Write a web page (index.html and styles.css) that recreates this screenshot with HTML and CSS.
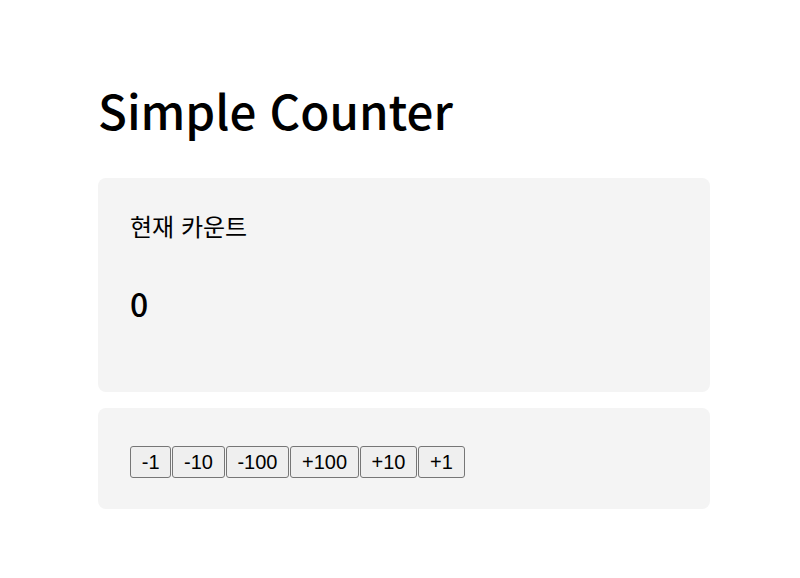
FILE: index.html
```html
<!DOCTYPE html>
<html lang="ko">

<head>
    <meta charset="UTF-8" />
    <meta name="viewport" content="width=device-width,initial-scale=1.0" />
    <title>Simple Counter</title>
    <link rel="stylesheet" href="styles.css">
</head>

<body>
    <div class="app">
        <h1 class="title">Simple Counter</h1>

        <div class="card count-card">
            <div class="count-label">현재 카운트</div>
            <div class="count-value">0</div>
        </div>

        <div class="card button-card">
            <div class="buttons">
                <button class="step-btn">-1</button>
                <button class="step-btn">-10</button>
                <button class="step-btn">-100</button>
                <button class="step-btn">+100</button>
                <button class="step-btn">+10</button>
                <button class="step-btn">+1</button>
            </div>
        </div>
    </div>
</body>

</html>
```

FILE: styles.css
```css
* {
    margin: 0;
    padding: 0;
    box-sizing: border-box;
}

body {
    background: #ffffff;
    color: #000000;
    font-family: "Noto Sans CJK KR", "Noto Sans", sans-serif;
}

.app {
    width: 612px;
    margin-left: 98px;
    padding-top: 81px;
}

.title {
    font-family: "Noto Sans CJK KR Medium", "Noto Sans CJK KR", sans-serif;
    font-size: 47.5px;
    font-weight: 500;
    line-height: 58px;
    margin-bottom: 39px;
}

.card {
    background: #f4f4f4;
    border-radius: 8px;
    margin-bottom: 16px;
}

.count-card {
    height: 214px;
    padding: 32px;
}

.count-label {
    font-size: 24px;
    line-height: 32px;
    margin-bottom: 39px;
}

.count-value {
    font-family: "Noto Sans CJK KR Medium", "Noto Sans CJK KR", sans-serif;
    font-size: 32px;
    font-weight: 500;
    line-height: 44px;
}

.button-card {
    height: 101px;
    padding: 38px 32px 0;
}

.buttons {
    display: flex;
    gap: 1px;
}

.step-btn {
    height: 32px;
    padding: 0 10.75px;
    font-family: "Liberation Sans", Arial, sans-serif;
    font-size: 20px;
    color: #000;
    background: #efefef;
    border: 1px solid #767676;
    border-radius: 3px;
}
```
